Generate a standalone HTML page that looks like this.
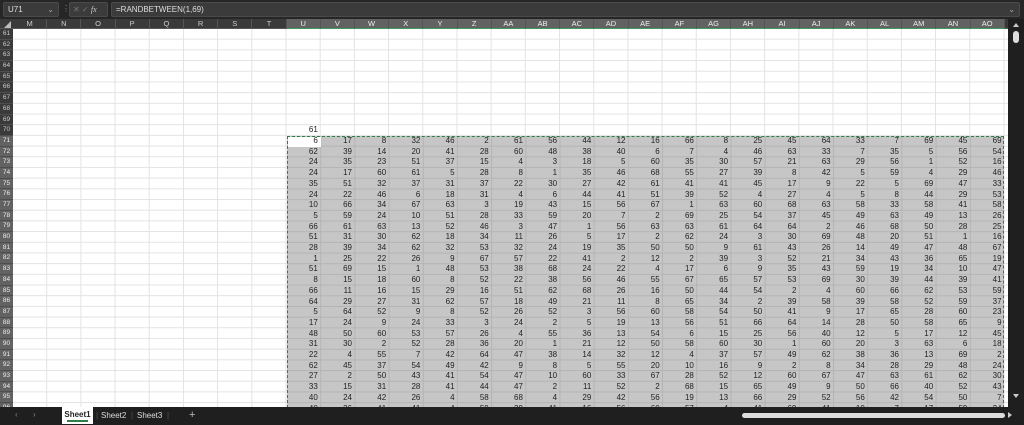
<!DOCTYPE html><html><head><meta charset="utf-8"><style>
*{margin:0;padding:0;box-sizing:border-box}
body{width:1024px;height:425px;overflow:hidden;background:#fff;font-family:"Liberation Sans",sans-serif;position:relative}
#top{position:absolute;left:0;top:0;width:1024px;height:19px;background:#262626}
.box{position:absolute;top:2px;height:15px;background:#3b3b3b;border:1px solid #4a4a4a;border-radius:2px;color:#ddd;font-size:8px;line-height:13px;padding-left:4px}
#ch{position:absolute;left:0;top:19px;width:1008px;height:10px;background:#3a3a3a;border-bottom:1px solid #555}
#ch span{position:absolute;top:0;width:34.2px;height:10px;text-align:center;color:#ccc;font-size:7.5px;line-height:10px;border-right:1px solid #555}
#ch span.s{background:#626262;border-bottom:1px solid #3c9a5f;color:#eee}
#rh{position:absolute;left:0;top:29px;width:13px;height:378px;background:#3a3a3a}
#rh div{height:10.7px;color:#ccc;font-size:6.5px;line-height:10.7px;text-align:center;border-bottom:1px solid #4e4e4e}
#rh div.s{background:#626262;color:#eee}
#grid{position:absolute;left:13px;top:29px;width:995px;height:378px;
background-image:linear-gradient(to right,#e3e3e3 1px,transparent 1px),linear-gradient(to bottom,#e3e3e3 1px,transparent 1px);
background-size:34.2px 10.7px;background-position:-1px -1px}
#sel{position:absolute;left:286.6px;top:136px;width:717px;height:272px;background-color:#c6c6c6;
background-image:linear-gradient(to right,#b4b4b4 1px,transparent 1px),linear-gradient(to bottom,#b4b4b4 1px,transparent 1px);
background-size:34.2px 10.7px;background-position:-1px -1px;outline:1.5px dashed #2e7d46;outline-offset:-1px}
#act{position:absolute;left:287.5px;top:137px;width:33px;height:9.5px;background:#fff}
.r{position:absolute;left:286.6px;height:10.7px;display:flex;font-size:8px;color:#222;line-height:10.7px}
.r span{width:34.2px;text-align:right;padding-right:3px}
#bot{position:absolute;left:0;top:407px;width:1024px;height:18px;background:#1f1f1f;color:#ddd;font-size:8px}
#vs{position:absolute;left:1008px;top:19px;width:16px;height:388px;background:#1f1f1f}
</style></head><body>
<div id="top">
<div class="box" style="left:3px;width:56px">U71<span style="position:absolute;right:4px;color:#aaa">⌄</span></div>
<div style="position:absolute;left:62px;top:4px;color:#888;font-size:8px">⋮</div>
<div class="box" style="left:69px;width:39px;color:#777;font-size:8px;padding-left:3px">✕ ✓ <i style="color:#ccc;font-family:'Liberation Serif',serif">fx</i></div>
<div class="box" style="left:111px;width:909px;font-size:8px">=RANDBETWEEN(1,69)<span style="position:absolute;right:4px;color:#aaa">⌄</span></div>
</div>
<div id="grid"></div>
<div id="sel"></div>
<div id="act"></div>
<div id="ch">
<span style="left:0;width:13px;border:none"><svg width="13" height="10"><path d="M11 2L11 9L4 9Z" fill="#bbb"/></svg></span>
<span style="left:13px">M</span><span style="left:47.2px">N</span><span style="left:81.4px">O</span><span style="left:115.6px">P</span><span style="left:149.8px">Q</span><span style="left:184px">R</span><span style="left:218.2px">S</span><span style="left:252.4px">T</span>
<span class="s" style="left:286.6px">U</span><span class="s" style="left:320.8px">V</span><span class="s" style="left:355px">W</span><span class="s" style="left:389.2px">X</span><span class="s" style="left:423.4px">Y</span><span class="s" style="left:457.6px">Z</span><span class="s" style="left:491.8px">AA</span><span class="s" style="left:526px">AB</span><span class="s" style="left:560.2px">AC</span><span class="s" style="left:594.4px">AD</span><span class="s" style="left:628.6px">AE</span><span class="s" style="left:662.8px">AF</span><span class="s" style="left:697px">AG</span><span class="s" style="left:731.2px">AH</span><span class="s" style="left:765.4px">AI</span><span class="s" style="left:799.6px">AJ</span><span class="s" style="left:833.8px">AK</span><span class="s" style="left:868px">AL</span><span class="s" style="left:902.2px">AM</span><span class="s" style="left:936.4px">AN</span><span class="s" style="left:970.6px">AO</span>
</div>
<div id="rh">
<div>61</div><div>62</div><div>63</div><div>64</div><div>65</div><div>66</div><div>67</div><div>68</div><div>69</div><div>70</div>
<div class="s">71</div><div class="s">72</div><div class="s">73</div><div class="s">74</div><div class="s">75</div><div class="s">76</div><div class="s">77</div><div class="s">78</div><div class="s">79</div><div class="s">80</div><div class="s">81</div><div class="s">82</div><div class="s">83</div><div class="s">84</div><div class="s">85</div><div class="s">86</div><div class="s">87</div><div class="s">88</div><div class="s">89</div><div class="s">90</div><div class="s">91</div><div class="s">92</div><div class="s">93</div><div class="s">94</div><div class="s">95</div><div class="s">96</div>
</div>
<div class="r" style="top:125.3px"><span>61</span></div>
<div class="r" style="top:136px"><span>6</span><span>17</span><span>8</span><span>32</span><span>46</span><span>2</span><span>61</span><span>56</span><span>44</span><span>12</span><span>16</span><span>66</span><span>8</span><span>25</span><span>45</span><span>64</span><span>33</span><span>7</span><span>69</span><span>45</span><span>69</span></div>
<div class="r" style="top:146.7px"><span>62</span><span>39</span><span>14</span><span>20</span><span>41</span><span>28</span><span>60</span><span>48</span><span>38</span><span>40</span><span>6</span><span>7</span><span>4</span><span>46</span><span>63</span><span>33</span><span>7</span><span>35</span><span>5</span><span>56</span><span>54</span></div>
<div class="r" style="top:157.4px"><span>24</span><span>35</span><span>23</span><span>51</span><span>37</span><span>15</span><span>4</span><span>3</span><span>18</span><span>5</span><span>60</span><span>35</span><span>30</span><span>57</span><span>21</span><span>63</span><span>29</span><span>56</span><span>1</span><span>52</span><span>16</span></div>
<div class="r" style="top:168.1px"><span>24</span><span>17</span><span>60</span><span>61</span><span>5</span><span>28</span><span>8</span><span>1</span><span>35</span><span>46</span><span>68</span><span>55</span><span>27</span><span>39</span><span>8</span><span>42</span><span>5</span><span>59</span><span>4</span><span>29</span><span>46</span></div>
<div class="r" style="top:178.8px"><span>35</span><span>51</span><span>32</span><span>37</span><span>31</span><span>37</span><span>22</span><span>30</span><span>27</span><span>42</span><span>61</span><span>41</span><span>41</span><span>45</span><span>17</span><span>9</span><span>22</span><span>5</span><span>69</span><span>47</span><span>33</span></div>
<div class="r" style="top:189.5px"><span>24</span><span>22</span><span>46</span><span>6</span><span>18</span><span>31</span><span>4</span><span>6</span><span>44</span><span>41</span><span>51</span><span>39</span><span>52</span><span>4</span><span>27</span><span>4</span><span>5</span><span>8</span><span>44</span><span>29</span><span>53</span></div>
<div class="r" style="top:200.2px"><span>10</span><span>66</span><span>34</span><span>67</span><span>63</span><span>3</span><span>19</span><span>43</span><span>15</span><span>56</span><span>67</span><span>1</span><span>63</span><span>60</span><span>68</span><span>63</span><span>58</span><span>33</span><span>58</span><span>41</span><span>58</span></div>
<div class="r" style="top:210.9px"><span>5</span><span>59</span><span>24</span><span>10</span><span>51</span><span>28</span><span>33</span><span>59</span><span>20</span><span>7</span><span>2</span><span>69</span><span>25</span><span>54</span><span>37</span><span>45</span><span>49</span><span>63</span><span>49</span><span>13</span><span>26</span></div>
<div class="r" style="top:221.6px"><span>66</span><span>61</span><span>63</span><span>13</span><span>52</span><span>46</span><span>3</span><span>47</span><span>1</span><span>56</span><span>63</span><span>63</span><span>61</span><span>64</span><span>64</span><span>2</span><span>46</span><span>68</span><span>50</span><span>28</span><span>25</span></div>
<div class="r" style="top:232.3px"><span>51</span><span>31</span><span>30</span><span>62</span><span>18</span><span>34</span><span>11</span><span>26</span><span>5</span><span>17</span><span>2</span><span>62</span><span>24</span><span>3</span><span>30</span><span>69</span><span>48</span><span>20</span><span>51</span><span>1</span><span>16</span></div>
<div class="r" style="top:243px"><span>28</span><span>39</span><span>34</span><span>62</span><span>32</span><span>53</span><span>32</span><span>24</span><span>19</span><span>35</span><span>50</span><span>50</span><span>9</span><span>61</span><span>43</span><span>26</span><span>14</span><span>49</span><span>47</span><span>48</span><span>67</span></div>
<div class="r" style="top:253.7px"><span>1</span><span>25</span><span>22</span><span>26</span><span>9</span><span>67</span><span>57</span><span>22</span><span>41</span><span>2</span><span>12</span><span>2</span><span>39</span><span>3</span><span>52</span><span>21</span><span>34</span><span>43</span><span>36</span><span>65</span><span>19</span></div>
<div class="r" style="top:264.4px"><span>51</span><span>69</span><span>15</span><span>1</span><span>48</span><span>53</span><span>38</span><span>68</span><span>24</span><span>22</span><span>4</span><span>17</span><span>6</span><span>9</span><span>35</span><span>43</span><span>59</span><span>19</span><span>34</span><span>10</span><span>47</span></div>
<div class="r" style="top:275.1px"><span>8</span><span>15</span><span>18</span><span>60</span><span>8</span><span>52</span><span>22</span><span>38</span><span>56</span><span>46</span><span>55</span><span>67</span><span>65</span><span>57</span><span>53</span><span>69</span><span>30</span><span>39</span><span>44</span><span>39</span><span>41</span></div>
<div class="r" style="top:285.8px"><span>66</span><span>11</span><span>16</span><span>15</span><span>29</span><span>16</span><span>51</span><span>62</span><span>68</span><span>26</span><span>16</span><span>50</span><span>44</span><span>54</span><span>2</span><span>4</span><span>60</span><span>66</span><span>62</span><span>53</span><span>59</span></div>
<div class="r" style="top:296.5px"><span>64</span><span>29</span><span>27</span><span>31</span><span>62</span><span>57</span><span>18</span><span>49</span><span>21</span><span>11</span><span>8</span><span>65</span><span>34</span><span>2</span><span>39</span><span>58</span><span>39</span><span>58</span><span>52</span><span>59</span><span>37</span></div>
<div class="r" style="top:307.2px"><span>5</span><span>64</span><span>52</span><span>9</span><span>8</span><span>52</span><span>26</span><span>52</span><span>3</span><span>56</span><span>60</span><span>58</span><span>54</span><span>50</span><span>41</span><span>9</span><span>17</span><span>65</span><span>28</span><span>60</span><span>23</span></div>
<div class="r" style="top:317.9px"><span>17</span><span>24</span><span>9</span><span>24</span><span>33</span><span>3</span><span>24</span><span>2</span><span>5</span><span>19</span><span>13</span><span>56</span><span>51</span><span>66</span><span>64</span><span>14</span><span>28</span><span>50</span><span>58</span><span>65</span><span>9</span></div>
<div class="r" style="top:328.6px"><span>48</span><span>50</span><span>60</span><span>53</span><span>57</span><span>26</span><span>4</span><span>55</span><span>36</span><span>13</span><span>54</span><span>6</span><span>15</span><span>25</span><span>56</span><span>40</span><span>12</span><span>5</span><span>17</span><span>12</span><span>45</span></div>
<div class="r" style="top:339.3px"><span>31</span><span>30</span><span>2</span><span>52</span><span>28</span><span>36</span><span>20</span><span>1</span><span>21</span><span>12</span><span>50</span><span>58</span><span>60</span><span>30</span><span>1</span><span>60</span><span>20</span><span>3</span><span>63</span><span>6</span><span>18</span></div>
<div class="r" style="top:350px"><span>22</span><span>4</span><span>55</span><span>7</span><span>42</span><span>64</span><span>47</span><span>38</span><span>14</span><span>32</span><span>12</span><span>4</span><span>37</span><span>57</span><span>49</span><span>62</span><span>38</span><span>36</span><span>13</span><span>69</span><span>2</span></div>
<div class="r" style="top:360.7px"><span>62</span><span>45</span><span>37</span><span>54</span><span>49</span><span>42</span><span>9</span><span>8</span><span>5</span><span>55</span><span>20</span><span>10</span><span>16</span><span>9</span><span>2</span><span>8</span><span>34</span><span>28</span><span>29</span><span>48</span><span>24</span></div>
<div class="r" style="top:371.4px"><span>27</span><span>2</span><span>50</span><span>43</span><span>41</span><span>54</span><span>47</span><span>10</span><span>60</span><span>33</span><span>67</span><span>28</span><span>52</span><span>12</span><span>60</span><span>67</span><span>47</span><span>63</span><span>61</span><span>62</span><span>30</span></div>
<div class="r" style="top:382.1px"><span>33</span><span>15</span><span>31</span><span>28</span><span>41</span><span>44</span><span>47</span><span>2</span><span>11</span><span>52</span><span>2</span><span>68</span><span>15</span><span>65</span><span>49</span><span>9</span><span>50</span><span>66</span><span>40</span><span>52</span><span>43</span></div>
<div class="r" style="top:392.8px"><span>40</span><span>24</span><span>42</span><span>26</span><span>4</span><span>58</span><span>68</span><span>4</span><span>29</span><span>42</span><span>56</span><span>19</span><span>13</span><span>66</span><span>29</span><span>52</span><span>56</span><span>42</span><span>54</span><span>50</span><span>7</span></div>
<div class="r" style="top:403.5px"><span>40</span><span>36</span><span>41</span><span>41</span><span>4</span><span>59</span><span>29</span><span>41</span><span>16</span><span>56</span><span>60</span><span>57</span><span>4</span><span>41</span><span>69</span><span>41</span><span>10</span><span>7</span><span>17</span><span>59</span><span>24</span></div>
<div id="vs">
<div style="position:absolute;left:5px;top:4px;width:0;height:0;border-left:3px solid transparent;border-right:3px solid transparent;border-bottom:4px solid #ccc"></div>
<div style="position:absolute;left:5px;top:12px;width:6px;height:12px;background:#ddd;border-radius:3px"></div>
<div style="position:absolute;left:5px;top:375px;width:0;height:0;border-left:3px solid transparent;border-right:3px solid transparent;border-top:4px solid #ccc"></div>
</div>
<div id="bot">
<span style="position:absolute;left:15px;top:3px;color:#888">‹</span>
<span style="position:absolute;left:33px;top:3px;color:#888">›</span>
<div style="position:absolute;left:62px;top:0;width:31px;height:17px;background:#fff;color:#222;text-align:center;line-height:16px;font-weight:bold">Sheet1<div style="position:absolute;left:5px;top:13px;width:21px;height:1.5px;background:#2e7d46"></div></div>
<span style="position:absolute;left:96px;top:4px;color:#555">|</span>
<span style="position:absolute;left:101px;top:4px">Sheet2</span>
<span style="position:absolute;left:131px;top:4px;color:#555">|</span>
<span style="position:absolute;left:137px;top:4px">Sheet3</span>
<span style="position:absolute;left:167px;top:4px;color:#555">|</span>
<span style="position:absolute;left:189px;top:2px;font-size:11px;color:#bbb">+</span>
<div style="position:absolute;left:742px;top:6px;width:263px;height:5px;background:#ddd;border-radius:3px"></div>
<div style="position:absolute;left:1008px;top:5px;width:0;height:0;border-top:3px solid transparent;border-bottom:3px solid transparent;border-left:4px solid #ccc"></div>
</div>
</body></html>
